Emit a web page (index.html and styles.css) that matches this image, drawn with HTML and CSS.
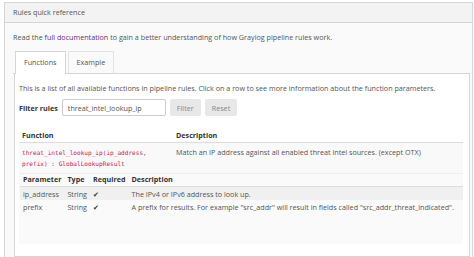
FILE: index.html
```html
<!DOCTYPE html>
<html>
	<head>
		<meta charset="UTF-8">
		<title>Rules quick reference</title>
		<link rel="stylesheet" href="styles.css">
	</head>
	<body>
		<div class="panel">
			<div class="panel-heading">Rules quick reference</div>
			<div class="panel-body">
				<p class="intro">Read the <a href="javascript:;">full documentation</a> to gain a better understanding of how Graylog pipeline rules work.</p>
				<ul class="tabs">
					<li class="active"><a href="javascript:;">Functions</a></li>
					<li><a href="javascript:;">Example</a></li>
				</ul>
				<div class="tab-content">
					<p class="hint">This is a list of all available functions in pipeline rules. Click on a row to see more information about the function parameters.</p>
					<form class="filter">
						<label>Filter rules</label>
						<input type="text" value="threat_intel_lookup_ip"/>
						<input type="button" class="btn" value="Filter"/>
						<input type="button" class="btn" value="Reset"/>
					</form>
					<table class="functions">
						<thead>
							<tr><th class="col-fn">Function</th><th>Description</th></tr>
						</thead>
						<tbody>
							<tr class="fn-row">
								<td><code>threat_intel_lookup_ip(ip_address,<br>prefix) : GlobalLookupResult</code></td>
								<td>Match an IP address against all enabled threat intel sources. (except OTX)</td>
							</tr>
							<tr class="details">
								<td colspan="2">
									<table class="params">
										<thead>
											<tr><th>Parameter</th><th>Type</th><th>Required</th><th>Description</th></tr>
										</thead>
										<tbody>
											<tr class="odd"><td>ip_address</td><td>String</td><td class="check">&#10004;</td><td>The IPv4 or IPv6 address to look up.</td></tr>
											<tr><td>prefix</td><td>String</td><td class="check">&#10004;</td><td>A prefix for results. For example "src_addr" will result in fields called "src_addr_threat_indicated".</td></tr>
										</tbody>
									</table>
								</td>
							</tr>
						</tbody>
					</table>
				</div>
			</div>
		</div>
	</body>
</html>
```

FILE: styles.css
```css
body{
	margin: 0;
	background: #fff;
	font: 7.2px/10px "Open Sans", "Liberation Sans", sans-serif;
	color: #555;
}
.panel{
	margin: 2px 1px 0 4px;
	border: 1px solid #d6d6d6;
	border-bottom: none;
	background: #fafafa;
}
.panel-heading{
	height: 19px;
	line-height: 19px;
	padding: 0 8px;
	background: #f3f3f3;
	border-bottom: 1px solid #d6d6d6;
	color: #555;
}
.panel-body{
	padding: 9px 2px 12px 8px;
}
p{
	margin: 0;
}
.intro a{
	color: #702785;
	text-decoration: none;
}
.tabs{
	margin: 9px 0 0 0;
	padding: 0 0 0 2px;
	list-style: none;
	display: flex;
	border-bottom: 1px solid #d6d6d6;
}
.tabs li{
	margin-right: 2px;
	margin-bottom: -1px;
}
.tabs a{
	display: block;
	height: 21px;
	line-height: 21px;
	padding: 0 8px;
	border: 1px solid #e4e4e4;
	border-bottom: none;
	color: #555;
	text-decoration: none;
}
.tabs .active a{
	background: #fff;
	border-color: #d6d6d6;
	height: 22px;
}
.tab-content{
	margin-left: 1px;
	background: #fff;
	border: 1px solid #d6d6d6;
	border-top: none;
	padding: 9px 6px 12px 4px;
}
.filter{
	display: flex;
	align-items: center;
	margin-top: 6px;
}
.filter label{
	font-weight: bold;
	color: #333;
	margin-right: 4px;
}
.filter input[type=text]{
	width: 92px;
	height: 15px;
	padding: 0 5px;
	border: 1px solid #ccc;
	border-radius: 2px;
	font: 7.2px "Open Sans", "Liberation Sans", sans-serif;
	color: #555;
}
.btn{
	height: 17px;
	margin-left: 4px;
	padding: 0 7px;
	border: none;
	border-radius: 2px;
	background: #e8e8e8;
	font: 7.2px "Open Sans", "Liberation Sans", sans-serif;
	color: #888;
}
table{
	border-collapse: collapse;
	width: 100%;
}
.functions{
	margin-top: 8px;
}
.functions th{
	text-align: left;
	font-weight: bold;
	color: #333;
	padding: 6px 3px 2px 3px;
	border-bottom: 1px solid #ddd;
}
.col-fn{
	width: 148px;
}
.fn-row td{
	background: #f9f9f9;
	padding: 4px 3px 4px 3px;
	vertical-align: top;
	border-bottom: 1px solid #eee;
}
code{
	font: 6.1px/11px "DejaVu Sans Mono", "Liberation Mono", monospace;
	color: #c7254e;
	white-space: nowrap;
}
.details > td{
	padding: 0 0 31px 1px;
	background: #fafafa;
}
.params th{
	text-align: left;
	font-weight: bold;
	color: #333;
	padding: 0 3px 2px 3px;
	white-space: nowrap;
}
.params td{
	padding: 2px 3px 1px 3px;
	white-space: nowrap;
}
.params th:last-child, .params td:last-child{
	width: 100%;
}
.params .odd td{
	background: #f0f0f0;
}
.check{
	color: #333;
}
```
